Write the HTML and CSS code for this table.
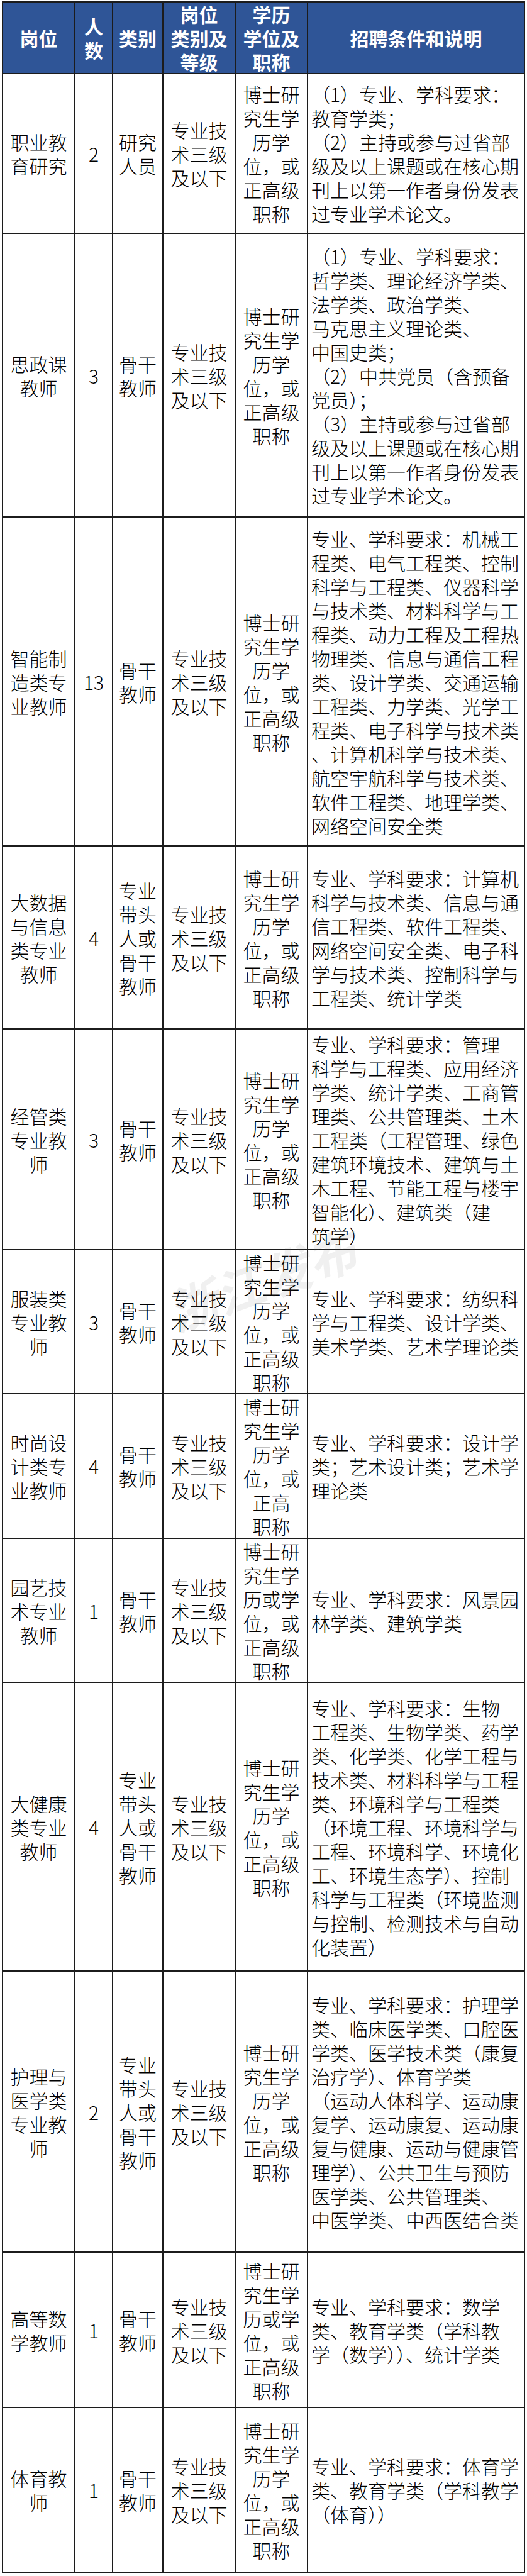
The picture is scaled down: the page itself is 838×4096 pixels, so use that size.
FILE: index.html
```html
<!DOCTYPE html>
<html lang="zh-CN">
<head>
<meta charset="utf-8">
<title>招聘岗位表</title>
<link rel="stylesheet" href="styles.css">
</head>
<body>
<div class="page">
  <div class="sheet">
    <div class="cell head">岗位</div>
    <div class="cell head">人<br>数</div>
    <div class="cell head">类别</div>
    <div class="cell head">岗位<br>类别及<br>等级</div>
    <div class="cell head">学历<br>学位及<br>职称</div>
    <div class="cell head">招聘条件和说明</div>

    <div class="cell">职业教<br>育研究</div>
    <div class="cell">2</div>
    <div class="cell">研究<br>人员</div>
    <div class="cell">专业技<br>术三级<br>及以下</div>
    <div class="cell">博士研<br>究生学<br>历学<br>位，或<br>正高级<br>职称</div>
    <div class="cell desc">（1）专业、学科要求：<br>教育学类；<br>（2）主持或参与过省部<br>级及以上课题或在核心期<br>刊上以第一作者身份发表<br>过专业学术论文。</div>

    <div class="cell">思政课<br>教师</div>
    <div class="cell">3</div>
    <div class="cell">骨干<br>教师</div>
    <div class="cell">专业技<br>术三级<br>及以下</div>
    <div class="cell">博士研<br>究生学<br>历学<br>位，或<br>正高级<br>职称</div>
    <div class="cell desc">（1）专业、学科要求：<br>哲学类、理论经济学类、<br>法学类、政治学类、<br>马克思主义理论类、<br>中国史类；<br>（2）中共党员（含预备<br>党员）；<br>（3）主持或参与过省部<br>级及以上课题或在核心期<br>刊上以第一作者身份发表<br>过专业学术论文。</div>

    <div class="cell">智能制<br>造类专<br>业教师</div>
    <div class="cell">13</div>
    <div class="cell">骨干<br>教师</div>
    <div class="cell">专业技<br>术三级<br>及以下</div>
    <div class="cell">博士研<br>究生学<br>历学<br>位，或<br>正高级<br>职称</div>
    <div class="cell desc">专业、学科要求：机械工<br>程类、电气工程类、控制<br>科学与工程类、仪器科学<br>与技术类、材料科学与工<br>程类、动力工程及工程热<br>物理类、信息与通信工程<br>类、设计学类、交通运输<br>工程类、力学类、光学工<br>程类、电子科学与技术类<br>、计算机科学与技术类、<br>航空宇航科学与技术类、<br>软件工程类、地理学类、<br>网络空间安全类</div>

    <div class="cell">大数据<br>与信息<br>类专业<br>教师</div>
    <div class="cell">4</div>
    <div class="cell">专业<br>带头<br>人或<br>骨干<br>教师</div>
    <div class="cell">专业技<br>术三级<br>及以下</div>
    <div class="cell">博士研<br>究生学<br>历学<br>位，或<br>正高级<br>职称</div>
    <div class="cell desc">专业、学科要求：计算机<br>科学与技术类、信息与通<br>信工程类、软件工程类、<br>网络空间安全类、电子科<br>学与技术类、控制科学与<br>工程类、统计学类</div>

    <div class="cell">经管类<br>专业教<br>师</div>
    <div class="cell">3</div>
    <div class="cell">骨干<br>教师</div>
    <div class="cell">专业技<br>术三级<br>及以下</div>
    <div class="cell">博士研<br>究生学<br>历学<br>位，或<br>正高级<br>职称</div>
    <div class="cell desc">专业、学科要求：管理<br>科学与工程类、应用经济<br>学类、统计学类、工商管<br>理类、公共管理类、土木<br>工程类（工程管理、绿色<br>建筑环境技术、建筑与土<br>木工程、节能工程与楼宇<br>智能化）、建筑类（建<br>筑学）</div>

    <div class="cell">服装类<br>专业教<br>师</div>
    <div class="cell">3</div>
    <div class="cell">骨干<br>教师</div>
    <div class="cell">专业技<br>术三级<br>及以下</div>
    <div class="cell">博士研<br>究生学<br>历学<br>位，或<br>正高级<br>职称</div>
    <div class="cell desc">专业、学科要求：纺织科<br>学与工程类、设计学类、<br>美术学类、艺术学理论类</div>

    <div class="cell">时尚设<br>计类专<br>业教师</div>
    <div class="cell">4</div>
    <div class="cell">骨干<br>教师</div>
    <div class="cell">专业技<br>术三级<br>及以下</div>
    <div class="cell">博士研<br>究生学<br>历学<br>位，或<br>正高<br>职称</div>
    <div class="cell desc">专业、学科要求：设计学<br>类；艺术设计类；艺术学<br>理论类</div>

    <div class="cell">园艺技<br>术专业<br>教师</div>
    <div class="cell">1</div>
    <div class="cell">骨干<br>教师</div>
    <div class="cell">专业技<br>术三级<br>及以下</div>
    <div class="cell">博士研<br>究生学<br>历或学<br>位，或<br>正高级<br>职称</div>
    <div class="cell desc">专业、学科要求：风景园<br>林学类、建筑学类</div>

    <div class="cell">大健康<br>类专业<br>教师</div>
    <div class="cell">4</div>
    <div class="cell">专业<br>带头<br>人或<br>骨干<br>教师</div>
    <div class="cell">专业技<br>术三级<br>及以下</div>
    <div class="cell">博士研<br>究生学<br>历学<br>位，或<br>正高级<br>职称</div>
    <div class="cell desc">专业、学科要求：生物<br>工程类、生物学类、药学<br>类、化学类、化学工程与<br>技术类、材料科学与工程<br>类、环境科学与工程类<br>（环境工程、环境科学与<br>工程、环境科学、环境化<br>工、环境生态学）、控制<br>科学与工程类（环境监测<br>与控制、检测技术与自动<br>化装置）</div>

    <div class="cell">护理与<br>医学类<br>专业教<br>师</div>
    <div class="cell">2</div>
    <div class="cell">专业<br>带头<br>人或<br>骨干<br>教师</div>
    <div class="cell">专业技<br>术三级<br>及以下</div>
    <div class="cell">博士研<br>究生学<br>历学<br>位，或<br>正高级<br>职称</div>
    <div class="cell desc">专业、学科要求：护理学<br>类、临床医学类、口腔医<br>学类、医学技术类（康复<br>治疗学）、体育学类<br>（运动人体科学、运动康<br>复学、运动康复、运动康<br>复与健康、运动与健康管<br>理学）、公共卫生与预防<br>医学类、公共管理类、<br>中医学类、中西医结合类</div>

    <div class="cell">高等数<br>学教师</div>
    <div class="cell">1</div>
    <div class="cell">骨干<br>教师</div>
    <div class="cell">专业技<br>术三级<br>及以下</div>
    <div class="cell">博士研<br>究生学<br>历或学<br>位，或<br>正高级<br>职称</div>
    <div class="cell desc">专业、学科要求：数学<br>类、教育学类（学科教<br>学（数学））、统计学类</div>

    <div class="cell">体育教<br>师</div>
    <div class="cell">1</div>
    <div class="cell">骨干<br>教师</div>
    <div class="cell">专业技<br>术三级<br>及以下</div>
    <div class="cell">博士研<br>究生学<br>历学<br>位，或<br>正高级<br>职称</div>
    <div class="cell desc">专业、学科要求：体育学<br>类、教育学类（学科教学<br>（体育））</div>

    <div class="watermark">浙江发布</div>
  </div>
</div>
</body>
</html>
```
FILE: styles.css
```css
* {
  box-sizing: border-box;
}

html,
body {
  margin: 0;
  padding: 0;
  background: #ffffff;
}

body {
  font-family: "Noto Sans CJK SC", "Noto Sans", sans-serif;
  color: #000000;
}

.page {
  padding: 2px 0 0 3px;
}

.sheet {
  position: relative;
  display: grid;
  width: 832px;
  grid-template-columns: 115px 60px 80px 115px 115px 345px;
  grid-template-rows: 114px 254px 451px 523px 291px 351px 229px 230px 229px 459px 447px 247px 262px;
  border-top: 2px solid #1c1c1c;
  border-left: 2px solid #1c1c1c;
}

.cell {
  display: flex;
  flex-direction: column;
  justify-content: center;
  align-items: center;
  text-align: center;
  border-right: 2px solid #1c1c1c;
  border-bottom: 2px solid #1c1c1c;
  font-size: 30px;
  line-height: 38px;
  font-weight: 300;
  white-space: nowrap;
  overflow: visible;
}

.head {
  background: #2f5597;
  color: #ffffff;
  font-weight: 700;
}

.desc {
  align-items: flex-start;
  text-align: left;
  padding-left: 5px;
}

.watermark {
  position: absolute;
  left: 255px;
  top: 1990px;
  font-size: 78px;
  line-height: 1;
  font-weight: 700;
  font-style: italic;
  color: rgba(110, 110, 110, 0.10);
  transform: rotate(-20deg);
  pointer-events: none;
  white-space: nowrap;
}
```
